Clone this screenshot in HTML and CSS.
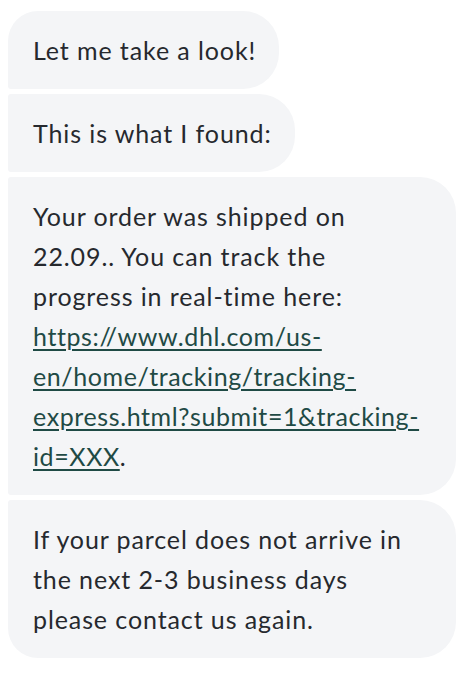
FILE: index.html
```html
<!DOCTYPE html>
<html lang="en">
<head>
<meta charset="utf-8">
<title>Chat</title>
<link rel="stylesheet" href="styles.css">
</head>
<body>
<div class="thread">
  <div class="bubble first">Let me take a look!</div>
  <div class="bubble">This is what I found:</div>
  <div class="bubble long">Your order was shipped on 22.09.. You can track the progress in real-time here: <a class="link" href="#">https://www.dhl.com/us-en/home/tracking/tracking-express.html?submit=1&amp;tracking-id=XXX</a>.</div>
  <div class="bubble long last">If your parcel does not arrive in the next 2-3 business days please contact us again.</div>
</div>
</body>
</html>
```
FILE: styles.css
```css
html, body {
  margin: 0;
  padding: 0;
  background: #ffffff;
}
body {
  font-family: Lato, "Open Sans", sans-serif;
  font-size: 25px;
  letter-spacing: 0.9px;
  line-height: 40px;
  color: #26292e;
}
.thread {
  display: flex;
  flex-direction: column;
  align-items: flex-start;
  gap: 5px;
  padding: 11px 16px 0 8px;
}
.bubble {
  max-width: 448px;
  box-sizing: border-box;
  background: #f4f5f7;
  padding: 19px 23px 19px 25px;
  border-radius: 3px 36px 36px 3px;
  overflow-wrap: break-word;
}
.bubble.long {
  padding-right: 30px;
}
.bubble.first {
  border-top-left-radius: 30px;
}
.bubble.last {
  border-bottom-left-radius: 30px;
}
.link {
  color: #1f4a45;
  letter-spacing: 0.6px;
  text-decoration: underline;
  text-underline-offset: 3px;
  text-decoration-thickness: 2px;
}
```
